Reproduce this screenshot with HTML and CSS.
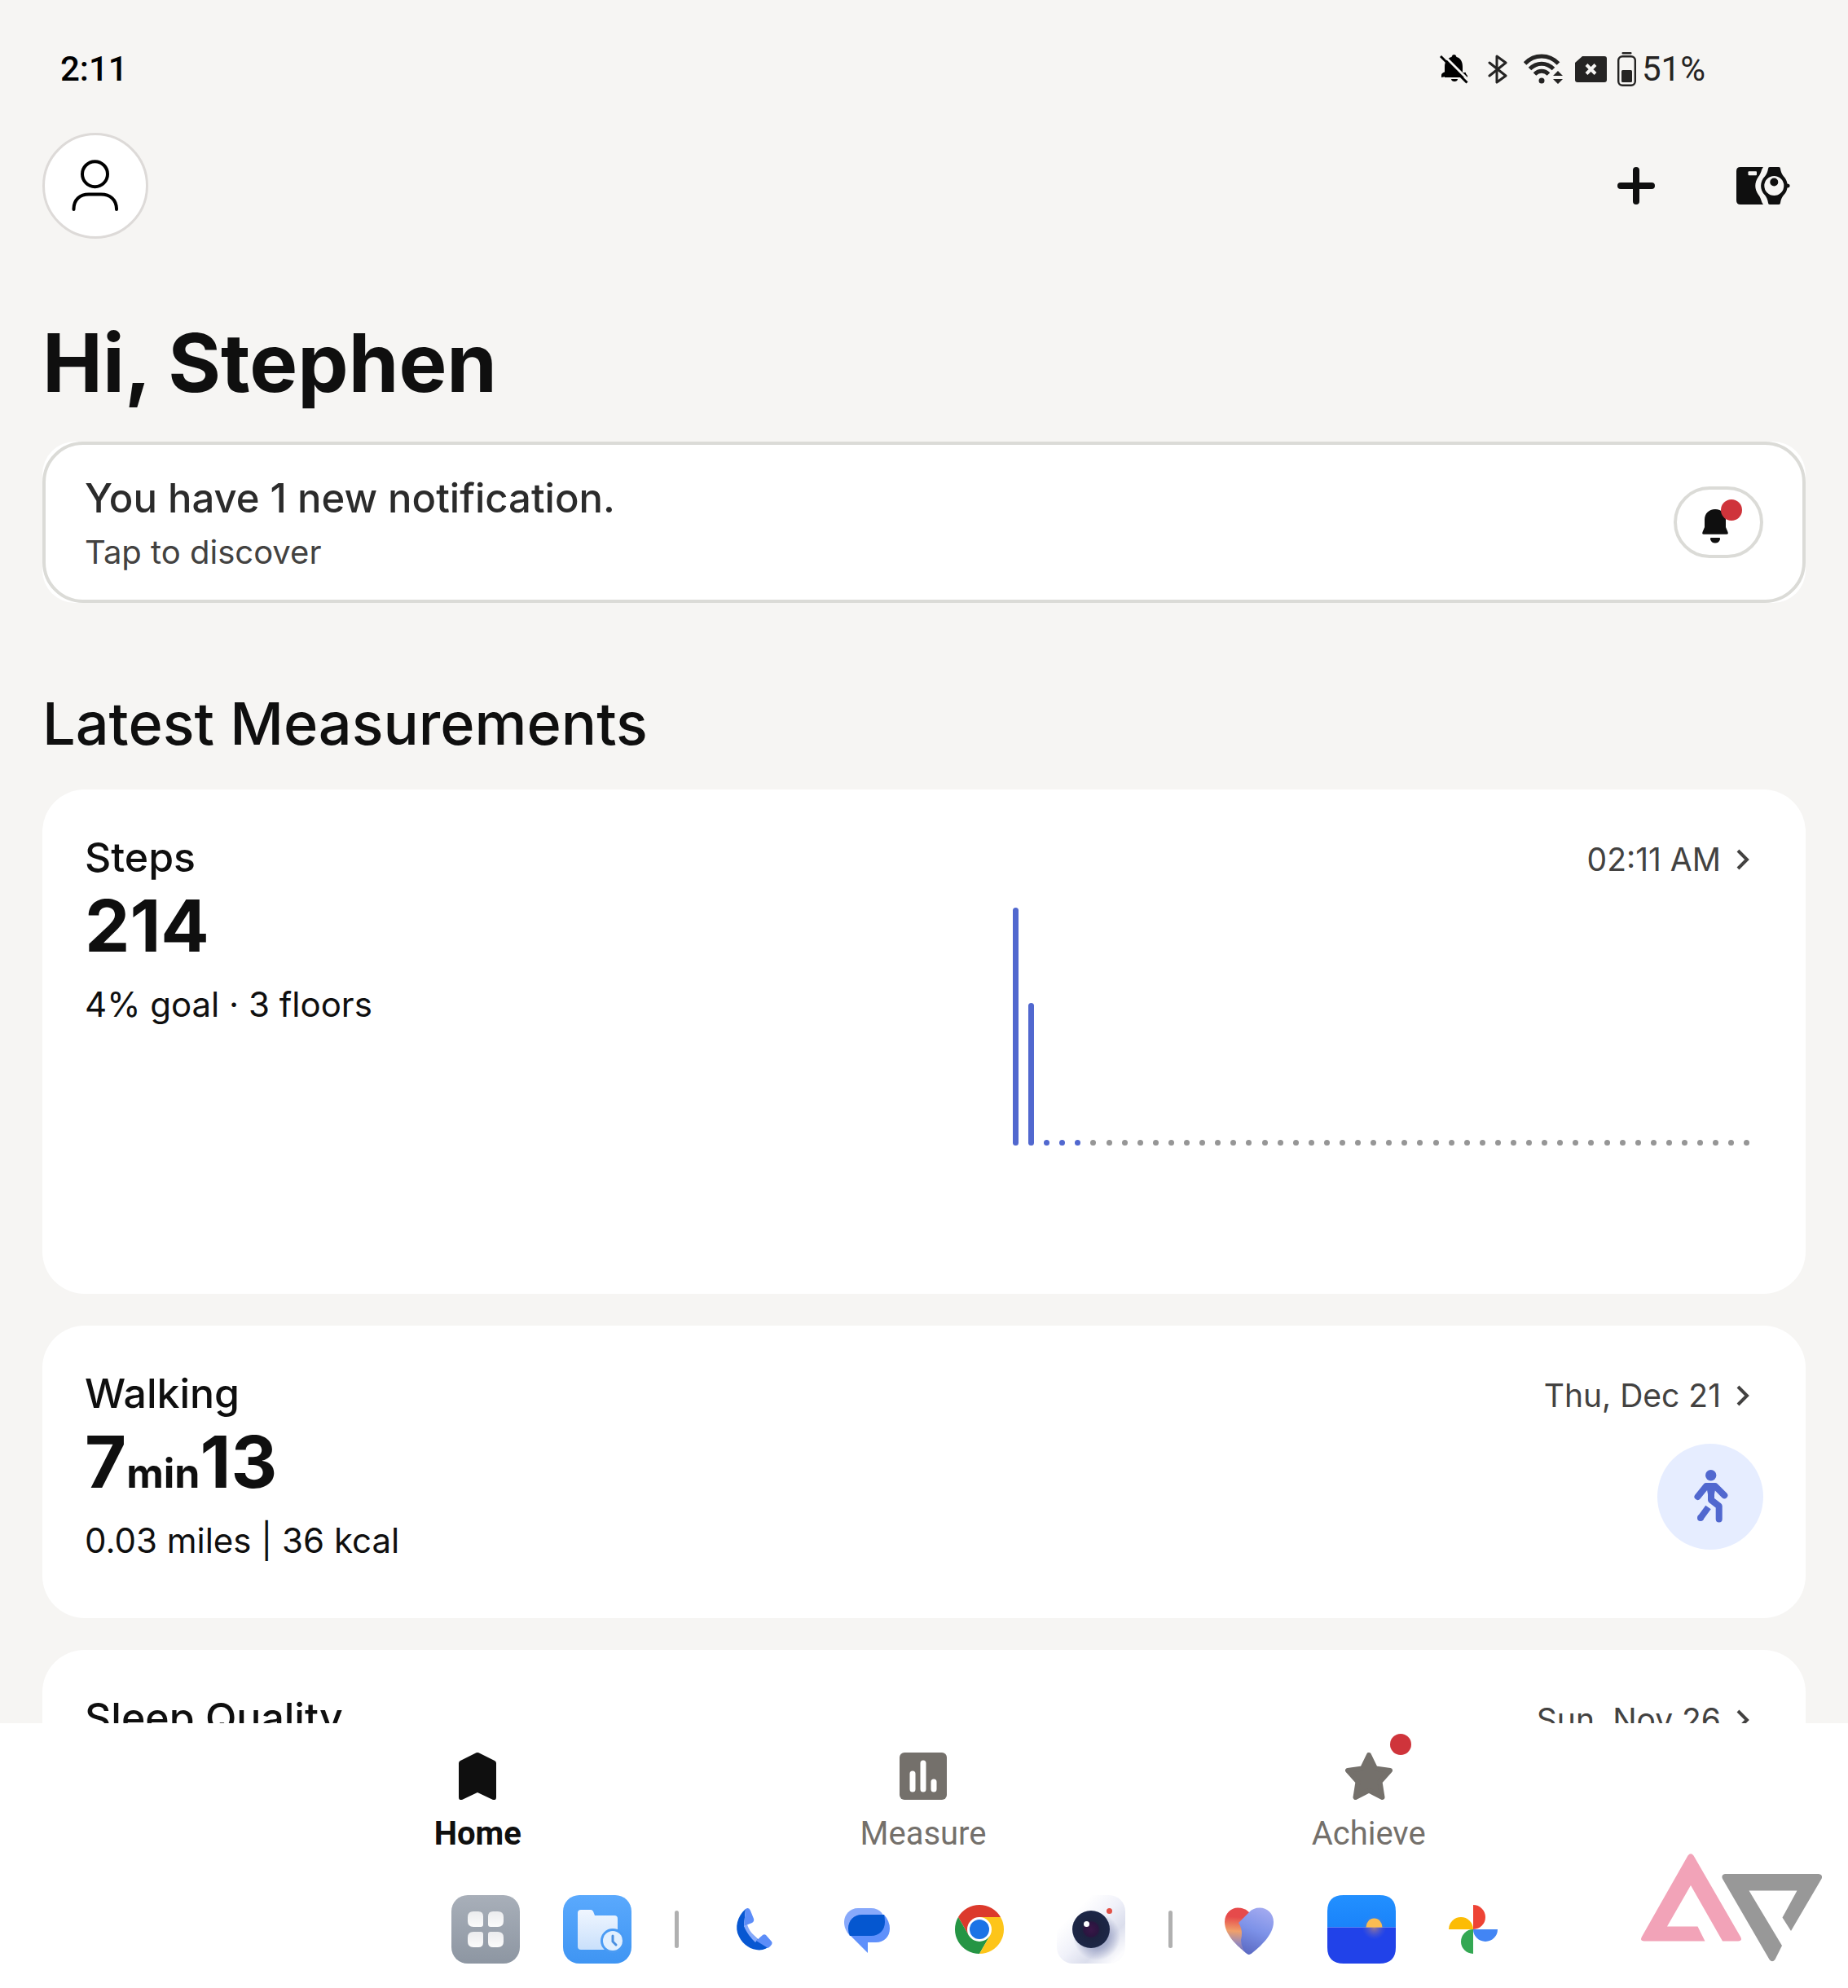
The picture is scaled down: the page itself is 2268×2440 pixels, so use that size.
FILE: index.html
```
<!DOCTYPE html>
<html lang="en">
<head>
    <meta charset="UTF-8">
    <meta name="viewport" content="width=device-width, initial-scale=1.0">
    <title>Home</title>
    <link rel="stylesheet" href="styles.css">
</head>
<body>
    <!-- Status bar -->
    <div class="status-bar">
        <span class="clock">2:11</span>
        <div class="status-icons">
            <svg width="52" height="36" viewBox="0 0 52 36">
                <path d="M6 28 V15 C6 8 10 4 14.500 3 C15 1 16 0 17.500 0 S20 1 20.500 3 C25 4 28 8 28 15 V22 H31 L34 26 V28Z" fill="#000"/>
                <path d="M2 28 V25 C2 23 4 22 7 21 V28 H32 V22" fill="#000"/>
                <path d="M14 30 H22 C22 34 14 34 14 30Z" fill="#000"/>
                <path d="M3 -1 L36 32" stroke="#f6f5f3" stroke-width="3"/>
                <path d="M1 2 L33.500 34.500" stroke="#000" stroke-width="3"/>
            </svg>
            <svg width="37" height="36" viewBox="0 0 37 36" fill="none" stroke="#252423" stroke-width="3" stroke-linejoin="round" stroke-linecap="round">
                <path d="M2 10 L22 26 L11 34 V2 L22 10 L2 26"/>
            </svg>
            <svg width="56" height="38" viewBox="0 0 56 38">
                <g fill="none" stroke="#252423" stroke-width="5">
                    <path d="M1.500 12 C13 0 31 0 42.500 12"/>
                    <path d="M7.500 18.500 C16 10 28 10 36.500 18.500"/>
                    <path d="M13.500 25 C18.500 20 25.500 20 30.500 25"/>
                </g>
                <circle cx="22" cy="33" r="3.500" fill="#252423"/>
                <path d="M36 27 L42 21 L48 27Z M36 31 H48 L42 37Z" fill="#252423"/>
            </svg>
            <svg width="45" height="32" viewBox="0 0 45 32">
                <path d="M9 0 H36 Q39 0 39 3 V29 Q39 32 36 32 H3 Q0 32 0 29 V8Z" fill="#252423"/>
                <path d="M14 10.500 L25 21.500 M25 10.500 L14 21.500" stroke="#f6f5f3" stroke-width="4"/>
            </svg>
            <svg width="23" height="42" viewBox="0 0 23 42">
                <rect x="5.500" y="0" width="12" height="2.500" rx="1" fill="#252423"/>
                <rect x="1.200" y="5.200" width="20.600" height="35.600" rx="5" fill="none" stroke="#252423" stroke-width="2.400"/>
                <rect x="5" y="22" width="13" height="15" rx="1.500" fill="#252423"/>
            </svg>
            <span>51%</span>
        </div>
    </div>

    <main class="content">
        <!-- Profile and shortcuts -->
        <header class="top-bar">
            <button class="avatar" aria-label="Profile">
                <svg width="124" height="124" viewBox="3 3 124 124" fill="none" stroke="#000" stroke-width="4" stroke-linecap="round">
                    <circle cx="64.500" cy="50.700" r="15.500"/>
                    <path d="M38.500 94 C38.500 82 46 75.500 57 75.500 H72 C83 75.500 91 82 91 94"/>
                </svg>
            </button>
            <div class="top-actions">
                <button aria-label="Add">
                    <svg width="46" height="46" viewBox="0 0 46 46" stroke="#0f0f0f" stroke-width="8" stroke-linecap="round">
                        <path d="M23 4 V42 M4 23 H42"/>
                    </svg>
                </button>
                <button aria-label="Devices">
                    <svg width="66" height="46" viewBox="0 0 66 46" fill="#0f0f0f">
                        <path d="M5 0 H33 C30 4 31 7 27 12 C22 19 22 27 27 34 C31 39 30 42 33 46 H5 Q0 46 0 41 V5 Q0 0 5 0Z"/>
                        <rect x="14.500" y="5.300" width="10.500" height="5" rx="1" fill="#f6f5f3"/>
                        <path fill-rule="evenodd" d="M41 0 H52 Q54 0 54 2 C54.500 6 56 9 58 11.500 C60.500 14 62 17 62.500 20.500 Q65.600 20.500 65.600 23 T62.500 25.500 C62 29 60.500 32 58 34.500 C56 37 54.500 40 54 44 Q54 46 52 46 H41 Q39 46 39 44 C38.500 40 37 37 35 34.500 C28.500 28 28.500 18 35 11.500 C37 9 38.500 6 39 2 Q39 0 41 0Z M46.300 11 A12 12 0 1 0 46.300 35 A12 12 0 1 0 46.300 11Z"/>
                        <circle cx="46.300" cy="18.500" r="5"/>
                    </svg>
                </button>
            </div>
        </header>

        <h1>Hi, Stephen</h1>

        <div class="notification">
            <div class="notification-inner">
                <div class="notification-body">
                    <p class="notification-title">You have 1 new notification.</p>
                    <p class="notification-text">Tap to discover</p>
                </div>
                <button class="bell" aria-label="Notifications">
                    <svg width="102" height="80" viewBox="0 0 102 80">
                        <g transform="translate(31 24)" fill="#0f0f0f">
                            <path d="M16 0 C8 0 3 5.500 3 13 V22 L0.500 28 C0 30 0 30.700 2 30.700 H30 C32 30.700 32 30 31.500 28 L29 22 V13 C29 5.500 24 0 16 0Z"/>
                            <path d="M11 35 H21 Q22.500 35 22 37 C21 40 19 41.500 16 41.500 S11 40 10 37 Q9.500 35 11 35Z"/>
                        </g>
                        <circle cx="67" cy="25" r="13" fill="#cf343b"/>
                    </svg>
                </button>
            </div>
        </div>

        <h2>Latest Measurements</h2>

        <!-- Measurement cards -->
        <div class="cards">
            <section class="card">
                <div class="card-info">
                    <h3>Steps</h3>
                    <p class="value">214</p>
                    <p class="detail">4% goal · 3 floors</p>
                </div>
                <div class="card-side">
                    <a class="card-date" href="#steps">02:11 AM
                        <svg width="16" height="26" viewBox="0 0 16 26"><path d="M2 2 L13 13 L2 24" fill="none" stroke="#434241" stroke-width="4"/></svg>
                    </a>
                    <div class="chart" id="stepsChart"></div>
                </div>
            </section>

            <section class="card">
                <div class="card-info">
                    <h3>Walking</h3>
                    <p class="value">7<small>min</small>13</p>
                    <p class="detail">0.03 miles | 36 kcal</p>
                </div>
                <div class="card-side">
                    <a class="card-date" href="#walking">Thu, Dec 21
                        <svg width="16" height="26" viewBox="0 0 16 26"><path d="M2 2 L13 13 L2 24" fill="none" stroke="#434241" stroke-width="4"/></svg>
                    </a>
                    <div class="activity">
                        <svg width="130" height="130" viewBox="0 0 130 130">
                            <circle cx="65.700" cy="38.700" r="6.700" fill="#5168cf"/>
                            <g fill="none" stroke="#5168cf" stroke-width="8" stroke-linejoin="round">
                                <path d="M49.500 65 L60 52 H71 L82.300 63.300 M66 52 V69 L75.700 76.500 V92.500" stroke-linecap="round"/>
                                <path d="M62.500 78 L53 91"/>
                            </g>
                            <path d="M60 51 H72 L70 62 H62Z" fill="#5168cf"/>
                            <circle cx="53" cy="91" r="4" fill="#5168cf"/>
                        </svg>
                    </div>
                </div>
            </section>

            <section class="card">
                <div class="card-info">
                    <h3>Sleep Quality</h3>
                </div>
                <div class="card-side">
                    <a class="card-date" href="#sleep">Sun, Nov 26
                        <svg width="16" height="26" viewBox="0 0 16 26"><path d="M2 2 L13 13 L2 24" fill="none" stroke="#434241" stroke-width="4"/></svg>
                    </a>
                </div>
            </section>
        </div>
    </main>

    <footer class="bottom">
        <!-- Tabs -->
        <nav class="tabs">
            <a class="active" href="#home">
                <svg width="46" height="58" viewBox="0 0 46 58"><path d="M20 1 Q23 -1 26 1 L44 10 Q46 11 46 13 V55 Q46 59 42 58 L23 49 L4 58 Q0 59 0 55 V13 Q0 11 2 10Z" fill="#0f0f0f"/></svg>
                Home
            </a>
            <a href="#measure">
                <svg width="58" height="58" viewBox="0 0 58 58">
                    <rect width="58" height="58" rx="6" fill="#74706b"/>
                    <path d="M16 26 V45 M29 13 V45 M42 36 V45" stroke="#fff" stroke-width="7" stroke-linecap="round"/>
                </svg>
                Measure
            </a>
            <a href="#achieve">
                <span class="tab-icon">
                    <svg width="58" height="58" viewBox="0 0 58 58"><path d="M29 3 L37 19.500 L55 22 L42.500 36 L45.500 55 L29 46.500 L12.500 55 L15.500 36 L3 22 L21 19.500Z" fill="#74706b" stroke="#74706b" stroke-width="6" stroke-linejoin="round"/></svg>
                    <span class="badge"></span>
                </span>
                Achieve
            </a>
        </nav>

        <!-- App dock -->
        <div class="dock">
            <a href="#apps" aria-label="Apps">
                <svg viewBox="0 0 84 84">
                    <defs>
                        <linearGradient id="appsBg" x2="0" y2="1"><stop stop-color="#a8afb9"/><stop offset="1" stop-color="#8d96a2"/></linearGradient>
                        <linearGradient id="appsTile" x2="0" y2="1"><stop stop-color="#ebecee"/><stop offset="1" stop-color="#fbfbfb"/></linearGradient>
                    </defs>
                    <rect width="84" height="84" rx="20" fill="url(#appsBg)"/>
                    <g fill="url(#appsTile)">
                        <path d="M27 20 H33 Q39 20 39 26 V36 Q39 39 36 39 H27 Q20 39 20 32 V27 Q20 20 27 20Z"/>
                        <path d="M51 20 H57 Q64 20 64 27 V32 Q64 39 57 39 H48 Q45 39 45 36 V26 Q45 20 51 20Z"/>
                        <path d="M27 45 H36 Q39 45 39 48 V58 Q39 64 33 64 H27 Q20 64 20 57 V52 Q20 45 27 45Z"/>
                        <path d="M48 45 H57 Q64 45 64 52 V57 Q64 64 57 64 H51 Q45 64 45 58 V48 Q45 45 48 45Z"/>
                    </g>
                </svg>
            </a>
            <a href="#files" aria-label="Files">
                <svg viewBox="0 0 84 84">
                    <defs>
                        <linearGradient id="filesBg" x2="0" y2="1"><stop stop-color="#5aa9fd"/><stop offset="1" stop-color="#3f95f3"/></linearGradient>
                        <linearGradient id="folder" x2="0" y2="1"><stop stop-color="#f0f6ff"/><stop offset="1" stop-color="#c9e0fb"/></linearGradient>
                    </defs>
                    <rect width="84" height="84" rx="20" fill="url(#filesBg)"/>
                    <path d="M22 18 H34 Q36 18 37 20 L39 25 H63 Q67 25 67 29 V67 H22 Q18 67 18 63 V22 Q18 18 22 18Z" fill="url(#folder)"/>
                    <circle cx="61" cy="56" r="15" fill="#4a9bf4"/>
                    <circle cx="61" cy="56" r="12" fill="#e2effe"/>
                    <path d="M61 50 V57 L65 61" fill="none" stroke="#4a8fe0" stroke-width="3" stroke-linecap="round"/>
                </svg>
            </a>
            <span class="divider"></span>
            <a href="#phone" aria-label="Phone">
                <svg viewBox="0 0 84 84">
                    <path d="M29 17 C19 26 15 40 21 51 C27 63 39 69 50 67 Q54 66 56.500 64 L44 54 L27 38Z" fill="#0757d2"/>
                    <path d="M27 38 C30 46 36 53 41 58 L44 54 C38 49 33 43 31 36Z" fill="#86a9fb"/>
                    <path d="M29 17 Q33 14 35 19 L39 29 Q40 32 37 34 L27 38Z" fill="#5d8df8"/>
                    <path d="M42 56 L50 49 Q52 47.500 54 49 L61 57 Q63.500 60 56.500 65Z" fill="#5d8df8"/>
                </svg>
            </a>
            <a href="#messages" aria-label="Messages">
                <svg viewBox="0 0 84 84">
                    <path d="M30 16 H46 C57 16 63 24 63 33 S57 50 46 50 H20 C15 44 13 39 13 33 C13 24 20 16 30 16Z" fill="#88a9fb"/>
                    <path d="M35 24 H62 Q69 32 69 41 C69 51 62 58 52 58 H42 V71 L20 49 Q18 46 18 41 C18 31 25 24 35 24Z" fill="#5f90fb"/>
                    <path d="M35 24 H62 Q63 28 63 33 C63 43 56 50 46 50 H20 Q18 46 18 41 C18 31 25 24 35 24Z" fill="#0557d0"/>
                </svg>
            </a>
            <a href="#chrome" aria-label="Chrome">
                <svg viewBox="0 0 84 84">
                    <path d="M16 27 A30 30 0 0 1 68 27 H42 L29 49.500Z" fill="#dc3a2c"/>
                    <path d="M16 27 A30 30 0 0 0 42 72 L55 49.500 L42 42 L29 49.500Z" fill="#259544"/>
                    <path d="M68 27 A30 30 0 0 1 42 72 L55 49.500 L42 27Z" fill="#fdc51a"/>
                    <circle cx="42" cy="42" r="15" fill="#fff"/>
                    <circle cx="42" cy="42" r="12" fill="#1b73e6"/>
                </svg>
            </a>
            <a href="#camera" aria-label="Camera">
                <svg viewBox="0 0 84 84">
                    <defs>
                        <linearGradient id="camBg" x1="0" y1="0" x2="1" y2="1"><stop offset="0.250" stop-color="#fff"/><stop offset="0.500" stop-color="#e6e8f6"/><stop offset="0.700" stop-color="#c3c8e0"/><stop offset="0.900" stop-color="#fafafd"/></linearGradient>
                        <radialGradient id="camLens"><stop stop-color="#3a1748"/><stop offset="0.380" stop-color="#2b1540"/><stop offset="0.480" stop-color="#1c2340"/><stop offset="1" stop-color="#1d2747"/></radialGradient>
                        <radialGradient id="camShade"><stop offset="0.500" stop-color="#8f97bd" stop-opacity="0.700"/><stop offset="1" stop-color="#8f97bd" stop-opacity="0"/></radialGradient>
                    </defs>
                    <rect width="84" height="84" rx="20" fill="url(#camBg)" opacity="0.600"/>
                    <circle cx="49" cy="51" r="29" fill="url(#camShade)"/>
                    <circle cx="42" cy="42" r="23" fill="url(#camLens)"/>
                    <circle cx="36.500" cy="35.500" r="3.500" fill="#fff"/>
                    <circle cx="64.500" cy="19.500" r="3.500" fill="#e25147"/>
                </svg>
            </a>
            <span class="divider"></span>
            <a href="#health" aria-label="Health">
                <svg viewBox="0 0 84 84">
                    <defs>
                        <linearGradient id="heartWarm" x1="0.400" y1="0" x2="0.350" y2="1"><stop offset="0.200" stop-color="#e64a4b"/><stop offset="0.500" stop-color="#f0a06a"/><stop offset="0.750" stop-color="#9c8bb8"/><stop offset="1" stop-color="#5f6bc4"/></linearGradient>
                        <linearGradient id="heartCool" x1="0.700" y1="0" x2="0.400" y2="1"><stop stop-color="#a3aaf0"/><stop offset="0.500" stop-color="#7d92e8"/><stop offset="1" stop-color="#5d6cc5"/></linearGradient>
                    </defs>
                    <path d="M41 73 Q39 73 36 70 C30 65 11 50 11 33 C11 22 19 15.500 27 15.500 Q36 15.500 41 21 L50 30Z" fill="url(#heartWarm)"/>
                    <path d="M41 73 Q43 73 46 70 C52 65 71 50 71 33 C71 22 63 15.500 54 15.500 Q46 15.500 41 21 L28 34 Q34 43 31 55 Q31 63 36 70 Q39 73 41 73Z" fill="url(#heartCool)"/>
                </svg>
            </a>
            <a href="#gallery" aria-label="Gallery">
                <svg viewBox="0 0 84 84">
                    <defs>
                        <linearGradient id="sky" x2="0" y2="1"><stop stop-color="#2290ff"/><stop offset="1" stop-color="#1a83fa"/></linearGradient>
                        <radialGradient id="glow"><stop stop-color="#e8985a" stop-opacity="0.900"/><stop offset="1" stop-color="#6e6fc0" stop-opacity="0"/></radialGradient>
                    </defs>
                    <path d="M0 39.500 V20 Q0 0 20 0 H64 Q84 0 84 20 V39.500Z" fill="url(#sky)"/>
                    <path d="M0 39.500 H84 V64 Q84 84 64 84 H20 Q0 84 0 64Z" fill="#2142e9"/>
                    <circle cx="57.500" cy="39.500" r="15" fill="url(#glow)" opacity="0.700"/>
                    <path d="M47.500 39.500 A10 11 0 0 1 67.500 39.500Z" fill="#fbbd52"/>
                </svg>
            </a>
            <a href="#photos" aria-label="Photos">
                <svg viewBox="0 0 84 84">
                    <path d="M42 12 A15 15 0 0 1 42 42Z" fill="#ee4335"/>
                    <path d="M12 42 A15 15 0 0 1 42 42Z" fill="#fcbc05"/>
                    <path d="M42 42 A15 15 0 0 0 72 42Z" fill="#4285f4"/>
                    <path d="M42 42 A15 15 0 0 0 42 72Z" fill="#34a853"/>
                </svg>
            </a>
        </div>

        <svg class="watermark" viewBox="0 0 222 133">
            <path d="M57.500 2.500 Q61 -2 64.500 2.500 L122 102 Q125 107.500 119 107.500 H100 L61 39 L32 89.500 H69.500 L78.500 107.500 H4 Q-2 107.500 1 102Z" fill="#f2a3b8"/>
            <path d="M103 25 H218 Q223.500 26 221.500 31 L184 95 L173.500 78.500 L191.500 45.500 H132.500 L173 113 L164.500 130 Q161 134.500 157.500 130 L100 31 Q98 26 103 25Z" fill="#989898"/>
        </svg>
    </footer>

    <script>
        // one mark per half hour, only the elapsed ones have a value
        const steps = [292, 175, 7, 7, 7];
        const chart = document.getElementById("stepsChart");

        for (let i = 0; i < 48; i++) {
            const bar = document.createElement("span");
            if (i < steps.length) {
                bar.className = "filled";
                bar.style.height = steps[i] + "px";
            }
            chart.appendChild(bar);
        }
    </script>
</body>
</html>
```

FILE: styles.css
```
* {
    margin: 0;
    padding: 0;
    box-sizing: border-box;
}

body {
    background-color: #f6f5f3;
    color: #0f0f0f;
    font-family: Inter, "Liberation Sans", sans-serif;
    display: flex;
    flex-direction: column;
    height: 100vh;
    overflow: hidden;
}

button {
    background: none;
    border: none;
    cursor: pointer;
}

a {
    color: inherit;
    text-decoration: none;
}

svg {
    display: block;
}

/* Status bar */
.status-bar {
    display: flex;
    justify-content: space-between;
    align-items: center;
    padding: 60px 175px 0 74px;
    font-family: Roboto, sans-serif;
    font-size: 42px;
    line-height: 50px;
}

.clock {
    color: #000;
    font-weight: 500;
}

.status-icons {
    display: flex;
    align-items: center;
    gap: 7px;
    color: #252423;
}

/* Main content */
.content {
    flex: 1;
    min-height: 0;
    overflow: hidden;
    padding: 53px 52px 0;
}

.top-bar {
    display: flex;
    justify-content: space-between;
    align-items: center;
}

.avatar {
    width: 130px;
    height: 130px;
    background: #fff;
    border: 3px solid #dddad8;
    border-radius: 50%;
}

.top-actions {
    display: flex;
    align-items: center;
    gap: 100px;
    padding-right: 19px;
}

h1 {
    margin: 92px 0 37px;
    font-size: 99px;
    line-height: 120px;
    font-weight: 700;
}

h2 {
    margin: 104px 0 37px;
    font-size: 72px;
    line-height: 88px;
    font-weight: 500;
}

.notification {
    background: #fff;
    border-radius: 40px;
}

.notification-inner {
    display: flex;
    justify-content: space-between;
    align-items: center;
    padding: 26px 48px;
    border: 4px solid #dbdbd7;
    border-radius: 50px;
}

.notification-body {
    padding-top: 6px;
}

.notification-title {
    color: #2b2b2b;
    font-size: 49px;
    line-height: 68px;
    font-weight: 500;
}

.notification-text {
    color: #434241;
    font-size: 40px;
    line-height: 64px;
}

.bell {
    border: 4px solid #dbdbd7;
    border-radius: 44px;
}

/* Cards */
.cards {
    display: flex;
    flex-direction: column;
    gap: 39px;
}

.card {
    display: flex;
    justify-content: space-between;
    padding: 52px 52px 63px;
    background: #fff;
    border-radius: 52px;
}

.card h3 {
    font-size: 50px;
    line-height: 62px;
    font-weight: 500;
}

.value {
    font-size: 88px;
    line-height: 106px;
    font-weight: 700;
}

.value small {
    font-size: 50px;
    line-height: 50px;
}

.detail {
    margin-top: 12px;
    font-size: 42px;
    line-height: 64px;
}

.card-side {
    display: flex;
    flex-direction: column;
    align-items: flex-end;
    gap: 25px;
    width: 45%;
}

.card-date {
    display: flex;
    align-items: center;
    gap: 19px;
    padding-right: 17px;
    color: #434241;
    font-size: 39px;
    line-height: 68px;
}

.chart {
    display: flex;
    justify-content: space-between;
    align-items: flex-end;
    align-self: stretch;
    height: 292px;
    margin: 0 16px 119px 6px;
}

.chart span {
    width: 7px;
    height: 7px;
    border-radius: 4px;
    background: #969696;
}

.chart .filled {
    background: #5168cf;
}

.activity {
    background: #e6edff;
    border-radius: 50%;
}

/* Bottom area */
.bottom {
    position: relative;
    padding: 36px 0 30px;
    background: #fff;
}

.tabs {
    display: grid;
    grid-template-columns: repeat(3, 1fr);
    padding: 0 315px 0 313px;
    font-family: Roboto, sans-serif;
    font-size: 40px;
    line-height: 48px;
    color: #74706b;
}

.tabs a {
    display: flex;
    flex-direction: column;
    align-items: center;
    gap: 18px;
}

.tabs .active {
    color: #0f0f0f;
    font-weight: 700;
}

.tab-icon {
    position: relative;
}

.badge {
    position: absolute;
    top: -23px;
    right: -23px;
    width: 26px;
    height: 26px;
    border-radius: 50%;
    background: #cf343b;
}

.dock {
    display: flex;
    justify-content: center;
    align-items: center;
    gap: 53px;
    margin-top: 51px;
    padding-left: 136px;
}

.dock svg {
    width: 84px;
    height: 84px;
}

.divider {
    width: 5px;
    height: 46px;
    border-radius: 3px;
    background: #b0b0b0;
}

.watermark {
    position: absolute;
    right: 32px;
    bottom: 32px;
    width: 222px;
    height: 133px;
}
```
